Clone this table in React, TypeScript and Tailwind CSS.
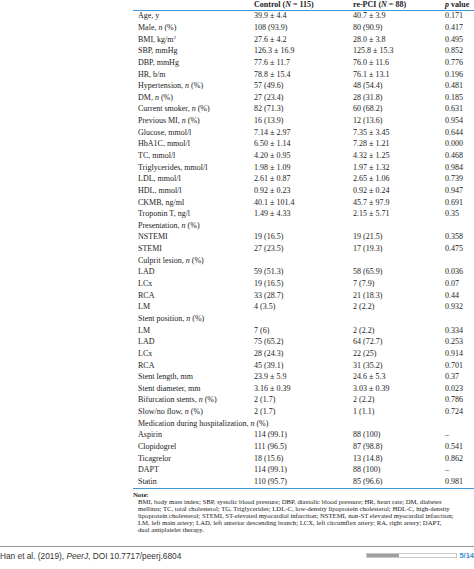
import React from 'react'

type Row = { label: React.ReactNode; c?: string; r?: string; p?: string }

const n = <i>n</i>

const rows: Row[] = [
  { label: 'Age, y', c: '39.9 ± 4.4', r: '40.7 ± 3.9', p: '0.171' },
  { label: <>Male, {n} (%)</>, c: '108 (93.9)', r: '80 (90.9)', p: '0.417' },
  { label: <>BMI, kg/m<sup className="text-[5px]">2</sup></>, c: '27.6 ± 4.2', r: '28.0 ± 3.8', p: '0.495' },
  { label: 'SBP, mmHg', c: '126.3 ± 16.9', r: '125.8 ± 15.3', p: '0.852' },
  { label: 'DBP, mmHg', c: '77.6 ± 11.7', r: '76.0 ± 11.6', p: '0.776' },
  { label: 'HR, b/m', c: '78.8 ± 15.4', r: '76.1 ± 13.1', p: '0.196' },
  { label: <>Hypertension, {n} (%)</>, c: '57 (49.6)', r: '48 (54.4)', p: '0.481' },
  { label: <>DM, {n} (%)</>, c: '27 (23.4)', r: '28 (31.8)', p: '0.185' },
  { label: <>Current smoker, {n} (%)</>, c: '82 (71.3)', r: '60 (68.2)', p: '0.631' },
  { label: <>Previous MI, {n} (%)</>, c: '16 (13.9)', r: '12 (13.6)', p: '0.954' },
  { label: 'Glucose, mmol/l', c: '7.14 ± 2.97', r: '7.35 ± 3.45', p: '0.644' },
  { label: 'HbA1C, mmol/l', c: '6.50 ± 1.14', r: '7.28 ± 1.21', p: '0.000' },
  { label: 'TC, mmol/l', c: '4.20 ± 0.95', r: '4.32 ± 1.25', p: '0.468' },
  { label: 'Triglycerides, mmol/l', c: '1.98 ± 1.09', r: '1.97 ± 1.32', p: '0.984' },
  { label: 'LDL, mmol/l', c: '2.61 ± 0.87', r: '2.65 ± 1.06', p: '0.739' },
  { label: 'HDL, mmol/l', c: '0.92 ± 0.23', r: '0.92 ± 0.24', p: '0.947' },
  { label: 'CKMB, ng/ml', c: '40.1 ± 101.4', r: '45.7 ± 97.9', p: '0.691' },
  { label: 'Troponin T, ng/l', c: '1.49 ± 4.33', r: '2.15 ± 5.71', p: '0.35' },
  { label: <>Presentation, {n} (%)</> },
  { label: 'NSTEMI', c: '19 (16.5)', r: '19 (21.5)', p: '0.358' },
  { label: 'STEMI', c: '27 (23.5)', r: '17 (19.3)', p: '0.475' },
  { label: <>Culprit lesion, {n} (%)</> },
  { label: 'LAD', c: '59 (51.3)', r: '58 (65.9)', p: '0.036' },
  { label: 'LCx', c: '19 (16.5)', r: '7 (7.9)', p: '0.07' },
  { label: 'RCA', c: '33 (28.7)', r: '21 (18.3)', p: '0.44' },
  { label: 'LM', c: '4 (3.5)', r: '2 (2.2)', p: '0.932' },
  { label: <>Stent position, {n} (%)</> },
  { label: 'LM', c: '7 (6)', r: '2 (2.2)', p: '0.334' },
  { label: 'LAD', c: '75 (65.2)', r: '64 (72.7)', p: '0.253' },
  { label: 'LCx', c: '28 (24.3)', r: '22 (25)', p: '0.914' },
  { label: 'RCA', c: '45 (39.1)', r: '31 (35.2)', p: '0.701' },
  { label: 'Stent length, mm', c: '23.9 ± 5.9', r: '24.6 ± 5.3', p: '0.37' },
  { label: 'Stent diameter, mm', c: '3.16 ± 0.39', r: '3.03 ± 0.39', p: '0.023' },
  { label: <>Bifurcation stents, {n} (%)</>, c: '2 (1.7)', r: '2 (2.2)', p: '0.786' },
  { label: <>Slow/no flow, {n} (%)</>, c: '2 (1.7)', r: '1 (1.1)', p: '0.724' },
  { label: <>Medication during hospitalization, {n} (%)</> },
  { label: 'Aspirin', c: '114 (99.1)', r: '88 (100)', p: '–' },
  { label: 'Clopidogrel', c: '111 (96.5)', r: '87 (98.8)', p: '0.541' },
  { label: 'Ticagrelor', c: '18 (15.6)', r: '13 (14.8)', p: '0.862' },
  { label: 'DAPT', c: '114 (99.1)', r: '88 (100)', p: '–' },
  { label: 'Statin', c: '110 (95.7)', r: '85 (96.6)', p: '0.981' },
]

const noteLines = [
  'BMI, body mass index; SBP, systolic blood pressure; DBP, diastolic blood pressure; HR, heart rate; DM, diabetes',
  'mellitus; TC, total cholesterol; TG, Triglycerides; LDL-C, low-density lipoprotein cholesterol; HDL-C, high-density',
  'lipoprotein cholesterol; STEMI, ST-elevated myocardial infarction; NSTEMI, non-ST elevated myocardial infarction;',
  'LM, left main artery; LAD, left anterior descending branch; LCX, left circumflex artery; RA, right artery; DAPT,',
  'dual antiplatelet therapy.',
]

const grid = 'grid grid-cols-[116px_99px_92px_1fr] pl-[5px] items-center'

export default function App() {
  return (
    <div className="w-[474px] h-[569px] bg-white overflow-hidden flex flex-col text-[#222]">
      <div className="ml-[133px] font-['Liberation_Serif',serif] text-[8px] leading-none">
        <div className={`${grid} h-[10.5px] font-bold border-b-[1.5px] border-[#3d9ad8] whitespace-nowrap`}>
          <span />
          <span>Control (<i>N</i> = 115)</span>
          <span>re-PCI (<i>N</i> = 88)</span>
          <span><i>p</i> value</span>
        </div>
        {rows.map((row, i) => (
          <div key={i} className={`${grid} h-[11.65px] whitespace-nowrap`}>
            <span>{row.label}</span>
            <span>{row.c}</span>
            <span>{row.r}</span>
            <span>{row.p}</span>
          </div>
        ))}
        <div className="border-t-[1.5px] border-[#3d9ad8]" />
        <div className="pt-[2px] text-[6.7px] leading-[7px]">
          <div className="font-bold">Note:</div>
          <div className="pl-[5px] whitespace-nowrap">
            {noteLines.map((l, i) => (
              <div key={i}>{l}</div>
            ))}
          </div>
        </div>
      </div>

      <div className="mt-auto mb-[9px] border-t-[1.5px] border-[#9a9a9a] pt-[5px] flex items-center font-['Liberation_Sans',sans-serif] text-[8.3px] leading-none">
        <span className="text-[#333]">
          Han et al. (2019), <i>PeerJ</i>, DOI 10.7717/peerj.6804
        </span>
        <div className="ml-auto flex items-center gap-[2px]">
          <div className="w-[91px] h-[5px] border border-[#c8c8c8] flex">
            <div className="w-[32px] h-full bg-[#9e9e9e]" />
          </div>
          <span className="font-bold text-[#3d8fd0] text-[7.5px]">5/14</span>
        </div>
      </div>
    </div>
  )
}
